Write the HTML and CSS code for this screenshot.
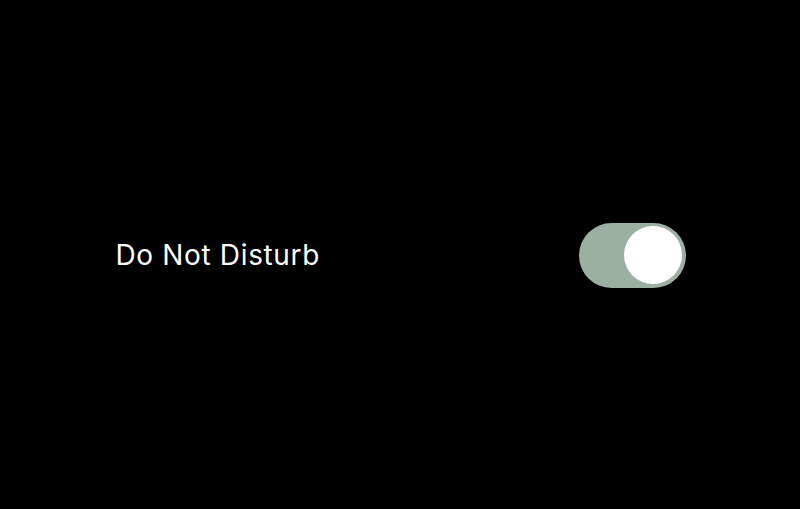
FILE: index.html
```html
<!DOCTYPE html>
<html lang="en">
<head>
  <meta charset="UTF-8" />
  <meta name="viewport" content="width=device-width, initial-scale=1.0" />
  <title>Do Not Disturb</title>
  <link rel="stylesheet" href="styles.css">
</head>
<body>
  <div class="setting-row">
    <span class="setting-label">Do Not Disturb</span>
    <div class="toggle on" role="switch" aria-checked="true">
      <div class="knob"></div>
    </div>
  </div>
</body>
</html>
```

FILE: styles.css
```css
* {
  box-sizing: border-box;
}
html, body {
  height: 100%;
}
body {
  margin: 0;
  background: #000;
  display: flex;
  align-items: center;
  justify-content: center;
  font-family: Inter, Roboto, 'Liberation Sans', sans-serif;
}
.setting-row {
  width: 570px;
  display: flex;
  align-items: center;
  justify-content: space-between;
  margin-left: 1px;
  margin-top: 1px;
}
.setting-label {
  color: #fff;
  font-size: 28px;
  letter-spacing: 0.65px;
}
.toggle {
  width: 107px;
  height: 65px;
  border-radius: 33px;
  background: #9bb0a2;
  padding: 4px;
  display: flex;
  justify-content: flex-end;
  align-items: center;
}
.knob {
  width: 58px;
  height: 58px;
  border-radius: 50%;
  background: #fff;
}
```
